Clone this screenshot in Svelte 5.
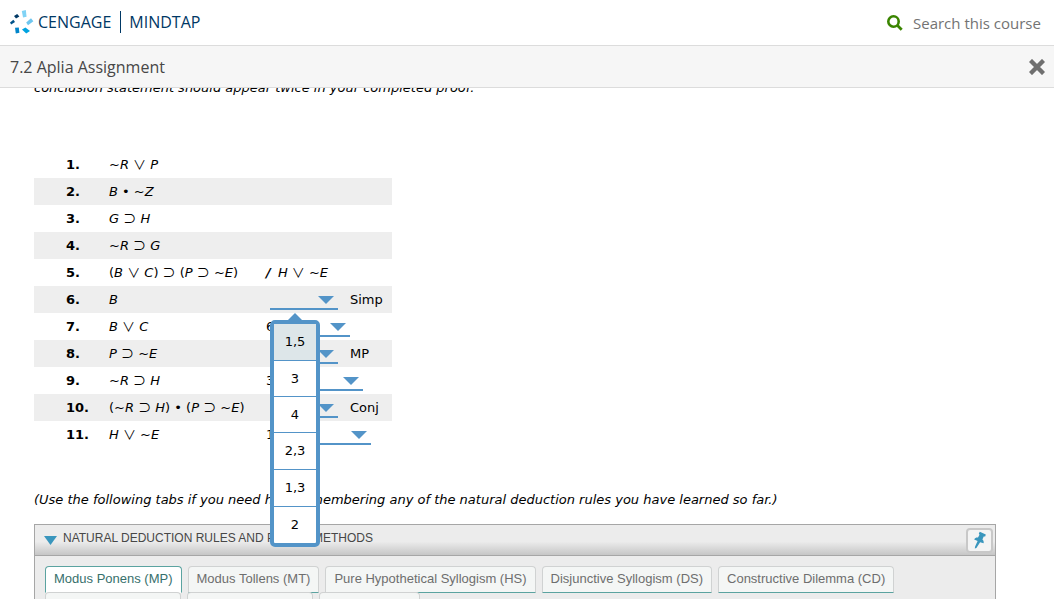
<script lang="ts">
	interface ProofLine {
		formula: string;
		goal?: string;
		before?: string;
		after?: string;
		choices?: string[];
	}

	const lineChoices = ['1,5', '3', '4', '2,3', '1,3', '2'];
	const ruleChoices = ['MP', 'MT', 'HS', 'DS', 'CD', 'Simp', 'Conj', 'Add'];

	const proof: ProofLine[] = [
		{ formula: '~R ∨ P' },
		{ formula: 'B • ~Z' },
		{ formula: 'G ⊃ H' },
		{ formula: '~R ⊃ G' },
		{ formula: '(B ∨ C) ⊃ (P ⊃ ~E)', goal: 'H ∨ ~E' },
		{ formula: 'B', after: 'Simp', choices: lineChoices },
		{ formula: 'B ∨ C', before: '6', choices: ruleChoices },
		{ formula: 'P ⊃ ~E', after: 'MP', choices: lineChoices },
		{ formula: '~R ⊃ H', before: '3,4', choices: ruleChoices },
		{ formula: '(~R ⊃ H) • (P ⊃ ~E)', after: 'Conj', choices: lineChoices },
		{ formula: 'H ∨ ~E', before: '1,10', choices: ruleChoices }
	];

	const tabs = [
		'Modus Ponens (MP)',
		'Modus Tollens (MT)',
		'Pure Hypothetical Syllogism (HS)',
		'Disjunctive Syllogism (DS)',
		'Constructive Dilemma (CD)',
		'Simplification (Simp)',
		'Conjunction (Conj)',
		'Addition (Add)'
	];

	let answers = $state<string[]>(proof.map(() => ''));
	let openLine = $state(5);
	let highlighted = $state(0);
	let activeTab = $state(0);
	let panelOpen = $state(true);

	function toggleMenu(event: MouseEvent, index: number) {
		event.preventDefault();
		openLine = openLine === index ? -1 : index;
		highlighted = 0;
	}

	function choose(index: number, value: string) {
		answers[index] = value;
		openLine = -1;
	}

	// Only the letters of a formula are italic, operators and brackets stay upright
	function tokens(formula: string) {
		return formula.split(/([A-Z∨⊃])/).filter(Boolean);
	}
</script>

{#snippet logic(formula: string)}
	{#each tokens(formula) as token}{#if /[A-Z]/.test(token)}<i>{token}</i>{:else if /[∨⊃]/.test(token)}<span class="operator">{token}</span>{:else}{token}{/if}{/each}
{/snippet}

<div class="app">
	<header class="topbar">
		<a class="brand" href="#home">
			<svg class="brand-mark" viewBox="0 0 24 24" width="24" height="24" aria-hidden="true">
				<path fill="#81d3f5" d="M11.800 1l4-1 .8 6.800-3.600.8z" />
				<path fill="#003865" d="M4 6l3.200-2L9.400 6.500 6 8.500z" />
				<path fill="#00538a" d="M0 12.400L3.400 9.800 5 12l-3.800 2.500z" />
				<path fill="#0085ca" d="M5 17.800l3.800-.3.600 5.200-3.600.8z" />
				<path fill="#00a3e0" d="M12 19.500l3.400-2 4.600 3.500-3.800 2.500z" />
				<path fill="#6ec6ef" d="M16.200 12.500l4.800-4.200 2.400 3-5.400 3.900z" />
			</svg>
			<span>CENGAGE</span>
			<span class="product">MINDTAP</span>
		</a>
		<label class="search">
			<svg viewBox="0 0 16 16" width="16" height="16" aria-hidden="true">
				<circle cx="6.500" cy="6.500" r="5.200" fill="none" stroke="#3a8500" stroke-width="2.600" />
				<path d="M10.500 10.500l4.200 4.200" stroke="#3a8500" stroke-width="2.800" />
			</svg>
			<input type="text" placeholder="Search this course" aria-label="Search this course" />
		</label>
	</header>

	<div class="titlebar">
		<h1>7.2 Aplia Assignment</h1>
		<button class="close-btn" type="button" aria-label="Close assignment">
			<svg viewBox="0 0 16 16" width="16" height="16" aria-hidden="true">
				<path
					d="M3 3l10 10M13 3L3 13"
					stroke="#6f6f6f"
					stroke-width="4.400"
					stroke-linecap="square"
				/>
			</svg>
		</button>
	</div>

	<main>
		<p class="instructions">conclusion statement should appear twice in your completed proof.</p>

		<table class="proof">
			<tbody>
				{#each proof as line, i}
					<tr>
						<th scope="row">{i + 1}.</th>
						<td class="formula">{@render logic(line.formula)}</td>
						<td class="reason">
							{#if line.goal}
								<b class="slash">/</b> {@render logic(line.goal)}
							{:else if line.choices}
								<div class="justification">
									{#if line.before}
										<span class="before">{line.before}</span>
									{/if}
									<div class="picker">
										<select
											bind:value={answers[i]}
											aria-label="Justification for line {i + 1}"
											onmousedown={(event) => toggleMenu(event, i)}
										>
											<option value=""></option>
											{#each line.choices as choice}
												<option value={choice}>{choice}</option>
											{/each}
										</select>
										<svg class="caret" viewBox="0 0 16 8" width="16" height="8" aria-hidden="true">
											<path d="M0 0h16L8 8z" fill="#5394c8" />
										</svg>
										{#if openLine === i}
											<div class="menu" role="listbox" aria-label="Choices for line {i + 1}">
												{#each line.choices as choice, c}
													<button
														type="button"
														role="option"
														aria-selected={highlighted === c}
														class:highlighted={highlighted === c}
														onmouseenter={() => (highlighted = c)}
														onclick={() => choose(i, choice)}
													>
														{choice}
													</button>
												{/each}
											</div>
										{/if}
									</div>
									{#if line.after}
										<span class="after">{line.after}</span>
									{/if}
								</div>
							{/if}
						</td>
					</tr>
				{/each}
			</tbody>
		</table>

		<p class="hint">
			(Use the following tabs if you need help remembering any of the natural deduction rules you have
			learned so far.)
		</p>

		<section class="panel">
			<div class="panel-header">
				<button
					class="panel-toggle"
					type="button"
					aria-expanded={panelOpen}
					onclick={() => (panelOpen = !panelOpen)}
				>
					<svg viewBox="0 0 13 9" width="13" height="9" aria-hidden="true">
						<path d="M0 0h13L6.500 9z" fill="#3a96bd" />
					</svg>
					NATURAL DEDUCTION RULES AND PROOF METHODS
				</button>
				<button class="pin-btn" type="button" aria-label="Pin panel">
					<svg viewBox="0 0 14 18" width="14" height="18" aria-hidden="true">
						<path
							fill="#3a96bd"
							d="M6.800.8l6 2.600-.6 2-1.500.2-1.300 2.800c1.200.9 1.600 2.200 1.200 3.900L7.100 11.200 3.400 17l-1.600.4.3-1.900 2.500-5.600L1.200 8.400c.9-1.500 2.200-2.100 3.800-1.800l1.500-2.900-.7-1.200z"
						/>
					</svg>
				</button>
			</div>
			{#if panelOpen}
				<div class="tabs" role="tablist">
					{#each tabs as tab, t}
						<button
							type="button"
							role="tab"
							class:active={activeTab === t}
							aria-selected={activeTab === t}
							onclick={() => (activeTab = t)}
						>
							{tab}
						</button>
						{#if t === 4}
							<span class="row-break"></span>
						{/if}
					{/each}
				</div>
			{/if}
		</section>
	</main>
</div>

<style>
	:global(body) {
		margin: 0;
		background: #fff;
	}

	.app {
		display: flex;
		flex-direction: column;
		height: 100vh;
		color: #000;
		font-family: Verdana, 'DejaVu Sans', sans-serif;
		font-size: 13px;
	}

	button,
	input,
	select {
		font: inherit;
		color: inherit;
		margin: 0;
		padding: 0;
		border: 0;
		background: none;
	}

	button {
		cursor: pointer;
	}

	svg {
		display: block;
		flex-shrink: 0;
	}

	.topbar,
	.titlebar {
		display: flex;
		align-items: center;
		justify-content: space-between;
		flex-shrink: 0;
		box-sizing: border-box;
		font-family: 'Open Sans', sans-serif;
	}

	.topbar {
		height: 46px;
		padding: 0 10px;
		border-bottom: 1px solid #dcdcdc;
	}

	.brand {
		display: flex;
		align-items: center;
		gap: 4px;
		padding-bottom: 1px;
		color: #003865;
		font-size: 16px;
		font-weight: 500;
		line-height: 22px;
		text-decoration: none;
	}

	.product {
		margin-left: 5px;
		padding-left: 8px;
		border-left: 1px solid #003865;
	}

	.search {
		display: flex;
		align-items: center;
		gap: 10px;
		font-size: 15px;
	}

	.search input {
		width: 131px;
		outline: none;
	}

	.search input::placeholder {
		color: #737373;
		opacity: 1;
	}

	.titlebar {
		height: 42px;
		padding: 0 9px 0 10px;
		background: #f6f6f6;
		border-bottom: 1px solid #dcdcdc;
	}

	.titlebar h1 {
		margin: 0;
		color: #474747;
		font-size: 16px;
		font-weight: 400;
	}

	main {
		flex: 1;
		min-height: 0;
		padding: 0 58px 0 34px;
		overflow: hidden auto;
		scrollbar-width: none;
	}

	.instructions,
	.hint {
		margin: 0;
		font-style: italic;
		line-height: 18px;
	}

	.instructions {
		margin: -9px 0 54px;
	}

	.proof {
		width: 358px;
		border-collapse: collapse;
		table-layout: fixed;
		line-height: 27px;
	}

	.proof tr:nth-child(even) {
		background: #eee;
	}

	.proof th,
	.proof td {
		padding: 0;
		text-align: left;
		white-space: nowrap;
	}

	.proof th {
		width: 43px;
		padding-left: 32px;
	}

	.proof .formula {
		width: 157px;
	}

	.operator {
		font-family: 'Noto Sans CJK JP', sans-serif;
		line-height: 1;
	}

	.slash {
		margin-right: 3px;
		font-style: italic;
	}

	.justification {
		display: flex;
		align-items: center;
		height: 27px;
	}

	.before {
		margin-right: 4px;
	}

	.after {
		margin-left: 8px;
	}

	.picker {
		position: relative;
		margin: 0 4px;
	}

	.picker select {
		display: block;
		box-sizing: border-box;
		width: 68px;
		height: 21px;
		padding: 0 20px 0 4px;
		appearance: none;
		border-bottom: 2px solid #5394c8;
		border-radius: 0;
		cursor: pointer;
	}

	.caret {
		position: absolute;
		top: 7px;
		right: 4px;
		pointer-events: none;
	}

	.menu {
		position: absolute;
		top: calc(100% + 10px);
		left: 0;
		z-index: 10;
		display: flex;
		flex-direction: column;
		box-sizing: border-box;
		width: 50px;
		background: #fff;
		border: 4px solid #5394c8;
		border-radius: 5px;
	}

	.menu::before {
		content: '';
		position: absolute;
		bottom: 100%;
		left: 50%;
		margin: 0 0 3px -8px;
		border: 8px solid transparent;
		border-top: 0;
		border-bottom-color: #5394c8;
	}

	.menu button {
		height: 36px;
		padding-bottom: 1px;
		text-align: center;
	}

	.menu button + button {
		border-top: 1px solid #5394c8;
	}

	.menu .highlighted {
		background: #dde6e9;
	}

	.menu button:nth-child(n + 4) {
		height: 37px;
	}

	.hint {
		margin: 43px 0 15px;
	}

	.panel {
		background: #ececec;
		border: 1px solid #a6a6a6;
		font-family: 'Liberation Sans', Arial, sans-serif;
	}

	.panel-header {
		display: flex;
		align-items: center;
		justify-content: space-between;
		height: 30px;
		padding: 0 2px 0 9px;
		background: linear-gradient(#ececec 55%, #c6c6c6);
		border-bottom: 1px solid #a6a6a6;
	}

	.panel-toggle {
		display: flex;
		align-items: center;
		gap: 6px;
		padding-bottom: 4px;
		color: #474747;
		font-size: 12px;
	}

	.panel-toggle svg {
		margin-top: 5px;
	}

	.pin-btn {
		display: flex;
		align-items: center;
		justify-content: center;
		box-sizing: border-box;
		width: 27px;
		height: 25px;
		background: #f4f4f4;
		border: 2px solid #c8c8c8;
		border-radius: 4px;
	}

	.tabs {
		display: flex;
		flex-wrap: wrap;
		column-gap: 6px;
		padding: 10px;
	}

	.tabs button {
		box-sizing: border-box;
		height: 27px;
		margin-bottom: -1px;
		padding: 0 8px 2px;
		background: #f4f6f5;
		border: 1px solid #d0d2d2;
		border-bottom-color: #5ba3a0;
		border-radius: 4px 4px 0 0;
		color: #6e6e6e;
		font-size: 13px;
	}

	.tabs button.active {
		background: #fff;
		border-color: #5ba3a0;
		border-bottom-color: #fff;
		color: #37706c;
	}

	.row-break {
		flex-basis: 100%;
	}
</style>
